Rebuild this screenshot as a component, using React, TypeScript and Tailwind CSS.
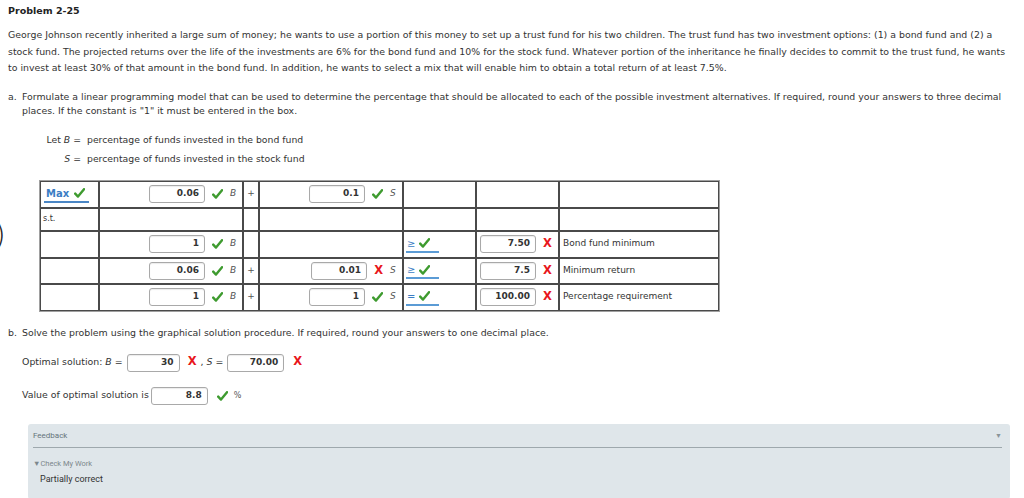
import React from 'react';

const font = { fontFamily: '"DejaVu Sans", Verdana, sans-serif' };

function Check() {
  return (
    <svg width="11" height="10" viewBox="0 0 11 10" className="shrink-0">
      <path d="M1.2 5.6 L4 8.6 L10 1.2" fill="none" stroke="#3e9b2f" strokeWidth="2.4" strokeLinecap="round" strokeLinejoin="round" />
    </svg>
  );
}

function Cross() {
  return <span className="font-bold text-[11.5px] leading-none text-[#e8161b]">X</span>;
}

function Box({ value, w = 'w-[56px]' }: { value: string; w?: string }) {
  return (
    <span className={`${w} h-[18px] inline-flex items-center justify-end pr-[5px] border border-[#a9a9a9] rounded-[3px] bg-white font-bold text-[9px] text-[#333] shadow-[inset_0_1px_1px_rgba(0,0,0,0.08)]`}>
      {value}
    </span>
  );
}

function Rel({ sym }: { sym: string }) {
  return (
    <span className="inline-flex items-center gap-[4px] w-[33px] h-[17px] border-b-2 border-[#5b9bd5] text-[#3b7dc4] text-[10px] pl-[1px]">
      {sym}
      <Check />
    </span>
  );
}

const cell = 'border border-[#4a4a4a] p-0 align-middle';

function Term({ box, mark, v }: { box: string; mark: 'ok' | 'x'; v: string }) {
  return (
    <div className="flex items-center justify-end gap-[7px] pr-[6px]">
      <Box value={box} />
      {mark === 'ok' ? <Check /> : <Cross />}
      <span className="italic text-[9px] text-[#555] w-[6px]">{v}</span>
    </div>
  );
}

export default function App() {
  return (
    <div className="w-[1024px] h-[498px] overflow-hidden bg-white text-[#333] pt-[4px] px-[8px]" style={font}>
      <h1 className="text-[9.5px] font-bold leading-[13px] text-[#222]">Problem 2-25</h1>
      <p className="mt-[10px] text-[9.4px] leading-[16.5px]">
        George Johnson recently inherited a large sum of money; he wants to use a portion of this money to set up a trust fund for his two children. The trust fund has two investment options: (1) a bond fund and (2) a stock fund. The projected returns over the life of the investments are 6% for the bond fund and 10% for the stock fund. Whatever portion of the inheritance he finally decides to commit to the trust fund, he wants to invest at least 30% of that amount in the bond fund. In addition, he wants to select a mix that will enable him to obtain a total return of at least 7.5%.
      </p>

      <div className="mt-[13px] flex text-[9.4px] leading-[14px]">
        <span className="w-[14px] shrink-0">a.</span>
        <p>
          Formulate a linear programming model that can be used to determine the percentage that should be allocated to each of the possible investment alternatives. If required, round your answers to three decimal places. If the constant is "1" it must be entered in the box.
        </p>
      </div>

      <div className="mt-[15px] grid grid-cols-[73px_1fr] gap-x-[6px] gap-y-[5px] text-[9.3px] leading-[14px]">
        <span className="text-right">Let <i>B</i> =</span>
        <span>percentage of funds invested in the bond fund</span>
        <span className="text-right"><i>S</i> =</span>
        <span>percentage of funds invested in the stock fund</span>
      </div>

      <div className="mt-[14px] flex items-start">
        <span className="-ml-[14px] mt-[40px] w-[25px] text-[30px] leading-[30px] font-light text-[#222]">)</span>
        <table className="ml-[20px] table-fixed border-separate border-spacing-0 border border-[#a0a0a0] text-[9px]">
          <tbody>
            <tr className="h-[27px]">
              <td className={`${cell} w-[59px]`}>
                <span className="ml-[3px] inline-flex items-center gap-[5px] w-[45px] h-[18px] border-b-2 border-[#4a86c5] text-[#3b7dc4] font-bold text-[10px] pl-[2px]">
                  Max <Check />
                </span>
              </td>
              <td className={`${cell} w-[144px]`}><Term box="0.06" mark="ok" v="B" /></td>
              <td className={`${cell} w-[16px] text-center text-[#555]`}>+</td>
              <td className={`${cell} w-[144px]`}><Term box="0.1" mark="ok" v="S" /></td>
              <td className={`${cell} w-[73px]`}></td>
              <td className={`${cell} w-[83px]`}></td>
              <td className={`${cell} w-[160px]`}></td>
            </tr>
            <tr className="h-[23px]">
              <td className={`${cell} text-[8px] pl-[2px]`}>s.t.</td>
              <td className={cell}></td>
              <td className={cell}></td>
              <td className={cell}></td>
              <td className={cell}></td>
              <td className={cell}></td>
              <td className={cell}></td>
            </tr>
            <tr className="h-[27px]">
              <td className={cell}></td>
              <td className={cell}><Term box="1" mark="ok" v="B" /></td>
              <td className={cell}></td>
              <td className={cell}></td>
              <td className={`${cell} pl-[2px]`}><Rel sym="≥" /></td>
              <td className={cell}>
                <div className="flex items-center gap-[7px] pl-[3px]"><Box value="7.50" /><Cross /></div>
              </td>
              <td className={`${cell} pl-[3px]`}>Bond fund minimum</td>
            </tr>
            <tr className="h-[26px]">
              <td className={cell}></td>
              <td className={cell}><Term box="0.06" mark="ok" v="B" /></td>
              <td className={`${cell} text-center text-[#555]`}>+</td>
              <td className={cell}><Term box="0.01" mark="x" v="S" /></td>
              <td className={`${cell} pl-[2px]`}><Rel sym="≥" /></td>
              <td className={cell}>
                <div className="flex items-center gap-[7px] pl-[3px]"><Box value="7.5" /><Cross /></div>
              </td>
              <td className={`${cell} pl-[3px]`}>Minimum return</td>
            </tr>
            <tr className="h-[27px]">
              <td className={cell}></td>
              <td className={cell}><Term box="1" mark="ok" v="B" /></td>
              <td className={`${cell} text-center text-[#555]`}>+</td>
              <td className={cell}><Term box="1" mark="ok" v="S" /></td>
              <td className={`${cell} pl-[2px]`}><Rel sym="=" /></td>
              <td className={cell}>
                <div className="flex items-center gap-[7px] pl-[3px]"><Box value="100.00" /><Cross /></div>
              </td>
              <td className={`${cell} pl-[3px]`}>Percentage requirement</td>
            </tr>
          </tbody>
        </table>
      </div>

      <div className="mt-[14px] flex text-[9.4px] leading-[14px]">
        <span className="w-[14px] shrink-0">b.</span>
        <p>Solve the problem using the graphical solution procedure. If required, round your answers to one decimal place.</p>
      </div>

      <div className="mt-[14px] pl-[14px] flex items-center h-[18px] text-[9.4px]">
        <span>Optimal solution: <i>B</i> =</span>
        <span className="ml-[4px]"><Box value="30" w="w-[53px]" /></span>
        <span className="ml-[8px]"><Cross /></span>
        <span className="ml-[4px]">, <i>S</i> =</span>
        <span className="ml-[4px]"><Box value="70.00" w="w-[57px]" /></span>
        <span className="ml-[9px]"><Cross /></span>
      </div>

      <div className="mt-[15px] pl-[14px] flex items-center h-[18px] text-[9.4px]">
        <span>Value of optimal solution is</span>
        <span className="ml-[2px]"><Box value="8.8" w="w-[57px]" /></span>
        <span className="ml-[9px]"><Check /></span>
        <span className="ml-[6px] text-[8px] text-[#555]">%</span>
      </div>

      <div className="mt-[19px] ml-[20px] w-[982px] h-[75px] rounded-[3px] bg-[#dfe6ea] pt-[7px] px-[5px]" style={{ fontFamily: 'Roboto, "Liberation Sans", Arial, sans-serif' }}>
        <div className="flex items-center justify-between pr-[3px] h-[11px]">
          <span className="text-[8px] text-[#66757c]">Feedback</span>
          <span className="text-[7px] text-[#8a9499]">▼</span>
        </div>
        <div className="mt-[5px] mr-[3px] h-[1.5px] bg-[#9ea8ad]"></div>
        <div className="mt-[10px] text-[7.5px] leading-[11px] text-[#7c878c]">▼Check My Work</div>
        <div className="mt-[4px] pl-[7px] text-[9px] leading-[12px] text-[#333]">Partially correct</div>
      </div>
    </div>
  );
}
